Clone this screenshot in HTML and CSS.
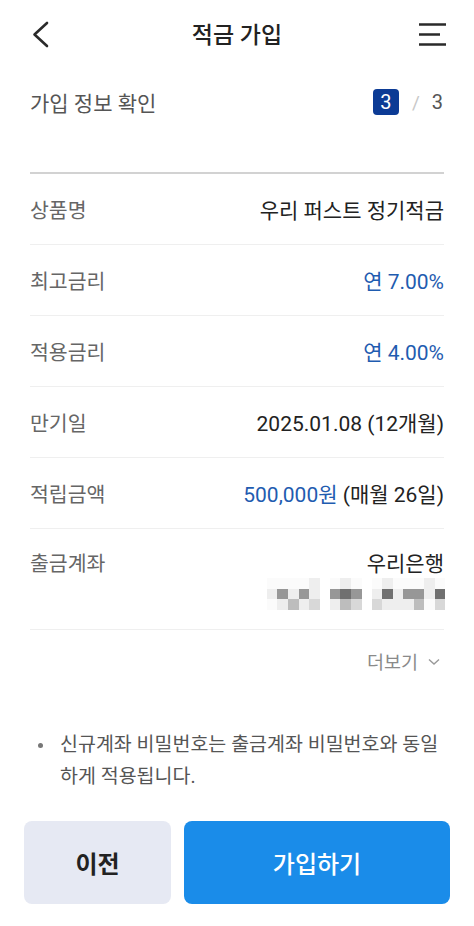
FILE: index.html
```html
<!DOCTYPE html>
<html lang="ko">
<head>
<meta charset="utf-8">
<link rel="stylesheet" href="styles.css">
</head>
<body>
<div class="page">
  <header class="topbar">
    <svg class="icon-back" width="60" height="72" viewBox="0 0 60 72"><path d="M47 23 L34.5 34.5 L47 46" fill="none" stroke="#2a2a2a" stroke-width="2.6" stroke-linecap="round" stroke-linejoin="round"/></svg>
    <h1 class="title">적금 가입</h1>
    <svg class="icon-menu" width="60" height="72" viewBox="0 0 60 72"><path d="M5 24.5 H32 M5 34.5 H26 M5 44.5 H32" fill="none" stroke="#2a2a2a" stroke-width="2.6"/></svg>
  </header>

  <div class="step-row">
    <span class="step-title">가입 정보 확인</span>
    <span class="step">
      <span class="step-badge">3</span>
      <span class="step-slash">/</span>
      <span class="step-total">3</span>
    </span>
  </div>

  <div class="info">
    <div class="row"><span class="label">상품명</span><span class="value">우리 퍼스트 정기적금</span></div>
    <div class="row"><span class="label">최고금리</span><span class="value blue">연 7.00%</span></div>
    <div class="row"><span class="label">적용금리</span><span class="value blue">연 4.00%</span></div>
    <div class="row"><span class="label">만기일</span><span class="value">2025.01.08 (12개월)</span></div>
    <div class="row"><span class="label">적립금액</span><span class="value"><span class="blue">500,000원</span> (매월 26일)</span></div>
    <div class="row row-account">
      <span class="label">출금계좌</span>
      <div class="account">
        <span class="value">우리은행</span>
        <div class="mosaic">
          <div class="grp g5">
            <i class="c0"></i><i class="c0"></i><i class="c0"></i><i class="c0"></i><i class="c1"></i>
            <i class="c1"></i><i class="c4"></i><i class="c1"></i><i class="c4"></i><i class="c1"></i>
            <i class="c0"></i><i class="c1"></i><i class="c3"></i><i class="c1"></i><i class="c2"></i>
          </div>
          <div class="grp g3">
            <i class="c0"></i><i class="c1"></i><i class="c0"></i>
            <i class="c4"></i><i class="c5"></i><i class="c4"></i>
            <i class="c1"></i><i class="c3"></i><i class="c2"></i>
          </div>
          <div class="grp g7">
            <i class="c0"></i><i class="c1"></i><i class="c0"></i><i class="c0"></i><i class="c0"></i><i class="c1"></i><i class="c0"></i>
            <i class="c1"></i><i class="c5"></i><i class="c1"></i><i class="c4"></i><i class="c4"></i><i class="c1"></i><i class="c5"></i>
            <i class="c2"></i><i class="c1"></i><i class="c1"></i><i class="c1"></i><i class="c3"></i><i class="c0"></i><i class="c2"></i>
          </div>
        </div>
      </div>
    </div>
  </div>

  <div class="more">
    <span>더보기</span>
    <svg width="12" height="8" viewBox="0 0 12 8"><path d="M1 1.5 L6 6 L11 1.5" fill="none" stroke="#999" stroke-width="1.4"/></svg>
  </div>

  <ul class="notes">
    <li>신규계좌 비밀번호는 출금계좌 비밀번호와 동일하게 적용됩니다.</li>
  </ul>

  <div class="actions">
    <button class="btn btn-prev">이전</button>
    <button class="btn btn-join">가입하기</button>
  </div>
</div>
</body>
</html>
```

FILE: styles.css
```css
* { box-sizing: border-box; }
html, body {
  margin: 0;
  padding: 0;
  background: #ffffff;
}
body {
  font-family: Roboto, "Noto Sans CJK KR", sans-serif;
  color: #222222;
  width: 474px;
}
.page {
  display: flex;
  flex-direction: column;
}
.topbar {
  height: 72px;
  display: grid;
  grid-template-columns: 60px 1fr 60px;
  align-items: center;
}
.icon-back, .icon-menu { display: block; }
.icon-menu { justify-self: end; }
.title {
  margin: 0;
  text-align: center;
  font-size: 23px;
  font-weight: 500;
  color: #222;
  line-height: 72px;
}
.step-row {
  display: flex;
  justify-content: space-between;
  align-items: center;
  height: 26px;
  margin: 17px 30px 57px 30px;
}
.step-title {
  font-size: 21px;
  color: #555;
  font-weight: 400;
}
.step {
  display: flex;
  align-items: center;
}
.step-badge {
  width: 26px;
  height: 26px;
  border-radius: 4px;
  background: #0c3b95;
  color: #fff;
  font-size: 20px;
  display: flex;
  align-items: center;
  justify-content: center;
}
.step-slash {
  color: #c8c8c8;
  font-size: 19px;
  margin: 0 12px 0 13px;
}
.step-total {
  color: #555;
  font-size: 20px;
  margin-right: 1px;
}
.info {
  margin: 0 30px;
  border-top: 2px solid #d2d2d2;
}
.row {
  height: 71px;
  border-bottom: 1px solid #efefef;
  display: flex;
  justify-content: space-between;
  align-items: center;
  font-size: 21px;
}
.label { color: #666; font-size: 20.5px; }
.value { color: #222; }
.blue { color: #1f5cb0; }
.row-account {
  height: 101px;
  align-items: flex-start;
  padding-top: 21px;
  line-height: 28px;
}
.account {
  display: flex;
  flex-direction: column;
  align-items: flex-end;
}
.mosaic {
  display: flex;
  gap: 10px;
  margin-right: -1px;
}
.grp {
  display: grid;
  grid-auto-rows: 10.7px;
}
.g5 { grid-template-columns: repeat(5, 10.6px); }
.g3 { grid-template-columns: repeat(3, 10.6px); }
.g7 { grid-template-columns: repeat(7, 10.5px); }
.grp i { display: block; }
.c0 { background: #fbfbfb; }
.c1 { background: #eeeeee; }
.c2 { background: #d8d8d8; }
.c3 { background: #bdbdbd; }
.c4 { background: #979797; }
.c5 { background: #707070; }
.more {
  height: 62px;
  margin: 0 30px;
  display: flex;
  justify-content: flex-end;
  align-items: center;
  gap: 10px;
  color: #8a8a8a;
  font-size: 18.5px;
  padding-right: 4px;
}
.more svg { display: block; margin-top: 2px; }
.notes {
  list-style: none;
  margin: 37px 30px 0 30px;
  padding: 0;
}
.notes li {
  position: relative;
  padding-left: 30px;
  font-size: 19.5px;
  line-height: 32px;
  color: #555;
}
.notes li::before {
  content: "";
  position: absolute;
  left: 8px;
  top: 14px;
  width: 5px;
  height: 5px;
  border-radius: 50%;
  background: #777;
}
.actions {
  display: flex;
  gap: 13px;
  margin: 28px 24px 0 24px;
}
.btn {
  height: 83px;
  border: none;
  border-radius: 8px;
  font-family: Roboto, "Noto Sans CJK KR", sans-serif;
  font-size: 24px;
}
.btn-prev {
  flex: 0 0 147px;
  background: #e6e9f3;
  color: #222;
  font-weight: 700;
}
.btn-join {
  flex: 1;
  background: #1a8ce9;
  color: #fff;
  font-weight: 500;
}
```
